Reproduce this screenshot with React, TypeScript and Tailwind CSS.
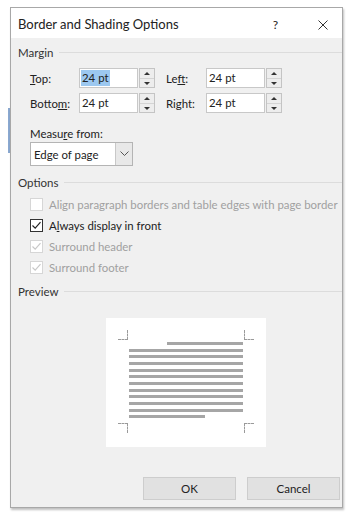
import React from "react";

const font = { fontFamily: 'Lato, "Noto Sans", sans-serif' };

const Spinner = () => (
  <div className="flex flex-col w-[16px] h-[20px] ml-[1px] border border-[#c4c4c4] bg-[#ededed]">
    <div className="flex-1 flex items-center justify-center border-b border-[#d4d4d4]">
      <div className="w-0 h-0 border-l-[3px] border-r-[3px] border-b-[3px] border-l-transparent border-r-transparent border-b-[#333]" />
    </div>
    <div className="flex-1 flex items-center justify-center">
      <div className="w-0 h-0 border-l-[3px] border-r-[3px] border-t-[3px] border-l-transparent border-r-transparent border-t-[#333]" />
    </div>
  </div>
);

const NumField = ({ selected }: { selected?: boolean }) => (
  <div className="flex items-center">
    <div className="w-[59px] h-[20px] bg-white border border-[#c8c8c8] flex items-center px-[1px]">
      <span className={selected ? "bg-[#9cc8f0] px-[1px] leading-[16px]" : "px-[1px] leading-[16px]"}>
        24 pt
      </span>
    </div>
    <Spinner />
  </div>
);

const Section = ({ label }: { label: string }) => (
  <div className="flex items-center gap-[6px] text-[11.5px] text-[#333]">
    <span>{label}</span>
    <div className="flex-1 h-px bg-[#dcdcdc]" />
  </div>
);

const Check = ({ checked, disabled, children }: { checked?: boolean; disabled?: boolean; children: React.ReactNode }) => (
  <div className="flex items-center gap-[6px] h-[21px] whitespace-nowrap">
    <div
      className={
        "w-[13px] h-[13px] shrink-0 bg-white border flex items-center justify-center " +
        (disabled ? "border-[#d6d6d6]" : "border-[#333]")
      }
    >
      {checked && (
        <svg width="11" height="11" viewBox="0 0 11 11">
          <path d="M1.5 5.5 L4.2 8.2 L9.5 2.2" fill="none" stroke={disabled ? "#c8c8c8" : "#222"} strokeWidth="1.2" />
        </svg>
      )}
    </div>
    <span className={disabled ? "text-[#a0a0a0]" : "text-[#222]"}>{children}</span>
  </div>
);

const Corner = ({ pos }: { pos: string }) => {
  const map: Record<string, string> = {
    tl: "border-r border-b",
    tr: "border-l border-b",
    bl: "border-r border-t",
    br: "border-l border-t",
  };
  return <div className={"w-[10px] h-[10px] border-dashed border-[#9a9a9a] " + map[pos]} />;
};

export default function App() {
  const lines = Array.from({ length: 10 });
  return (
    <div className="w-[350px] h-[517px] bg-white overflow-hidden flex items-start" style={font}>
      <div className="w-[10px] shrink-0 flex flex-col pt-[108px]">
        <div className="ml-[8px] w-[2px] h-[45px] bg-[#8aa8d0]" />
      </div>
      <div className="w-[333px] h-[501px] mt-[7px] shrink-0 flex flex-col border border-[#a8a8a8] shadow-[1px_2px_2px_rgba(0,0,0,0.25)]">
        <div className="h-[30px] shrink-0 bg-white flex items-center pt-[3px] pl-[7px] pr-[14px] text-[13px] text-[#222]">
          <span className="flex-1">Border and Shading Options</span>
          <span className="mr-[40px] text-[12px]">?</span>
          <svg width="10" height="10" viewBox="0 0 10 10">
            <path d="M0.5 0.5 L9.5 9.5 M9.5 0.5 L0.5 9.5" stroke="#333" strokeWidth="1" />
          </svg>
        </div>
        <div className="flex-1 min-h-0 bg-[#f0f0f0] flex flex-col pl-[7px] pt-[6px] text-[11.4px] text-[#222]">
          <Section label="Margin" />
          <div className="pl-[12px] mt-[7px] flex flex-col gap-[5px]">
            <div className="flex items-center">
              <span className="w-[49px]"><u>T</u>op:</span>
              <NumField selected />
              <span className="w-[40px] ml-[11px]">Le<u>f</u>t:</span>
              <NumField />
            </div>
            <div className="flex items-center">
              <span className="w-[49px]">Botto<u>m</u>:</span>
              <NumField />
              <span className="w-[40px] ml-[11px]">Right:</span>
              <NumField />
            </div>
            <div className="mt-[7px]">Measu<u>r</u>e from:</div>
            <div className="w-[103px] h-[24px] -mt-[5px] bg-white border border-[#b4b4b4] flex items-center">
              <span className="flex-1 pl-[3px]">Edge of page</span>
              <div className="w-[17px] h-full border-l border-[#c8c8c8] bg-[#e8e8e8] flex items-center justify-center">
                <svg width="9" height="6" viewBox="0 0 9 6">
                  <path d="M0.5 0.5 L4.5 4.5 L8.5 0.5" fill="none" stroke="#555" strokeWidth="1" />
                </svg>
              </div>
            </div>
          </div>
          <div className="mt-[8px]">
            <Section label="Options" />
          </div>
          <div className="pl-[12px] mt-[2px] flex flex-col">
            <Check disabled>Align paragraph borders and table edges with page border</Check>
            <Check checked>A<u>l</u>ways display in front</Check>
            <Check checked disabled>Surround header</Check>
            <Check checked disabled>Surround footer</Check>
          </div>
          <div className="mt-[5px]">
            <Section label="Preview" />
          </div>
          <div className="mt-[18px] ml-[88px] w-[160px] h-[129px] shrink-0 bg-white flex flex-col px-[12px] pt-[12px]">
            <div className="flex justify-between">
              <Corner pos="tl" />
              <Corner pos="tr" />
            </div>
            <div className="flex flex-col gap-[3.7px] px-[11px] mt-[2px]">
              <div className="ml-[38px] h-[3px] bg-[#a6a6a6]" />
              {lines.map((_, i) => (
                <div key={i} className="h-[3px] bg-[#a6a6a6]" />
              ))}
              <div className="w-[76px] h-[3px] bg-[#a6a6a6]" />
            </div>
            <div className="flex justify-between mt-[5px]">
              <Corner pos="bl" />
              <Corner pos="br" />
            </div>
          </div>
          <div className="flex justify-end gap-[11px] mt-[30px] pr-[2px]">
            <button className="w-[93px] h-[23px] bg-[#e1e1e1] border border-[#cdcdcd] text-[11.5px] text-[#222]">OK</button>
            <button className="w-[93px] h-[23px] bg-[#e1e1e1] border border-[#cdcdcd] text-[11.5px] text-[#222]">Cancel</button>
          </div>
        </div>
      </div>
    </div>
  );
}
